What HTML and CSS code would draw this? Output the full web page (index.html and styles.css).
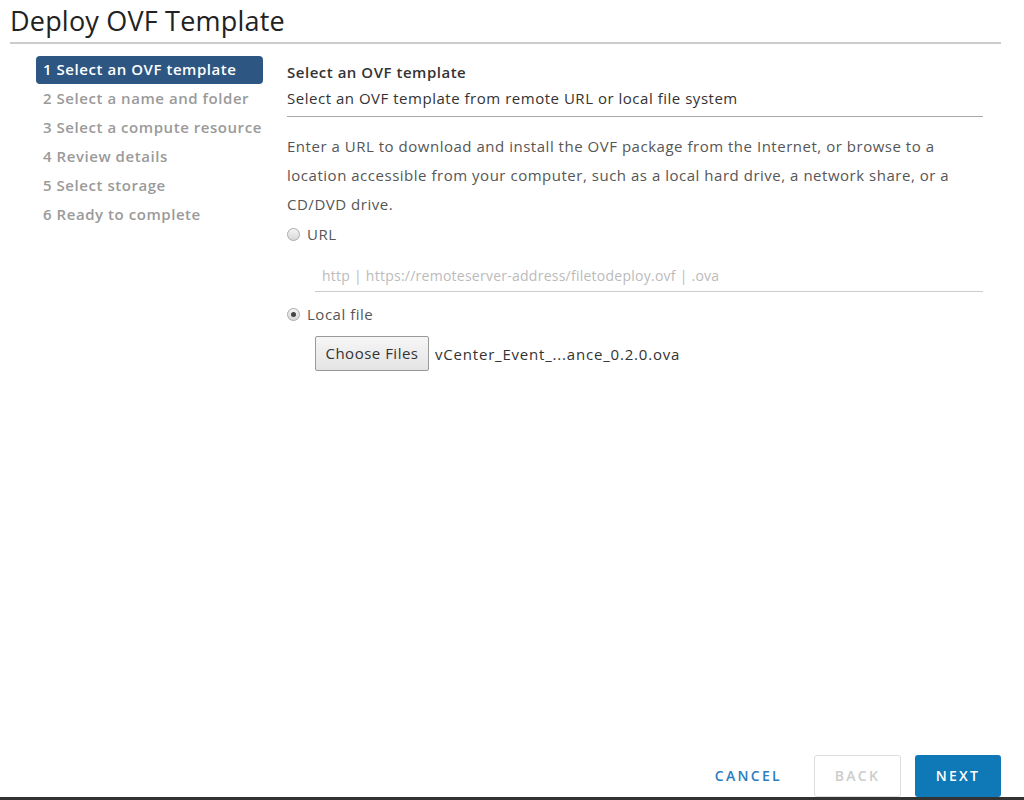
FILE: index.html
```html
<!DOCTYPE html>
<html>
<head>
<meta charset="utf-8">
<link rel="stylesheet" href="styles.css">
</head>
<body>
<div class="page">
  <header class="header"><h1 class="title">Deploy OVF Template</h1></header>
  <div class="body">
    <nav class="steps">
      <div class="step active">1 Select an OVF template</div>
      <div class="step">2 Select a name and folder</div>
      <div class="step">3 Select a compute resource</div>
      <div class="step">4 Review details</div>
      <div class="step">5 Select storage</div>
      <div class="step">6 Ready to complete</div>
    </nav>
    <main class="content">
      <div class="content-head">
        <div class="heading">Select an OVF template</div>
        <div class="subheading">Select an OVF template from remote URL or local file system</div>
      </div>
      <p class="desc">Enter a URL to download and install the OVF package from the Internet, or browse to a location accessible from your computer, such as a local hard drive, a network share, or a CD/DVD drive.</p>
      <label class="radio-row"><span class="radio"></span><span>URL</span></label>
      <div class="url-input">http | https://remoteserver-address/filetodeploy.ovf | .ova</div>
      <label class="radio-row local"><span class="radio checked"></span><span>Local file</span></label>
      <div class="file-row">
        <span class="file-btn">Choose Files</span>
        <span class="file-name">vCenter_Event_...ance_0.2.0.ova</span>
      </div>
    </main>
  </div>
  <footer class="footer">
    <span class="btn btn-link">CANCEL</span>
    <span class="btn btn-outline">BACK</span>
    <span class="btn btn-primary">NEXT</span>
  </footer>
</div>
</body>
</html>
```
FILE: styles.css
```css
html, body {
  margin: 0;
  padding: 0;
  background: #fff;
}
body {
  font-family: "Open Sans", "Liberation Sans", sans-serif;
  color: #565656;
}
.page {
  height: 800px;
  box-sizing: border-box;
  display: flex;
  flex-direction: column;
  border-bottom: 3px solid #333;
}
.header {
  margin: 0 23px 0 10px;
  border-bottom: 2px solid #ccc;
  height: 42px;
}
.title {
  margin: 0;
  font-weight: 400;
  font-size: 27px;
  line-height: 42px;
  color: #222;
  letter-spacing: 0.2px;
}
.body {
  flex: 1;
  display: flex;
  padding: 12px 41px 0 36px;
  gap: 24px;
}
.steps {
  width: 227px;
  flex: none;
  display: flex;
  flex-direction: column;
  gap: 1px;
}
.step {
  height: 28px;
  line-height: 27px;
  padding-left: 7px;
  font-size: 15px;
  font-weight: 600;
  letter-spacing: 0.55px;
  color: #9a9a9a;
  border-radius: 4px;
  white-space: nowrap;
}
.step.active {
  background: #2d5682;
  color: #fff;
}
.content {
  flex: 1;
  padding-top: 5px;
  font-size: 15px;
  letter-spacing: 0.52px;
}
.content-head {
  border-bottom: 1px solid #aaa;
  padding-bottom: 5px;
}
.heading {
  font-weight: 600;
  color: #333;
  line-height: 22px;
}
.subheading {
  color: #333;
  line-height: 26px;
  margin-top: 2px;
}
.desc {
  margin: 15px 0 0;
  line-height: 29px;
  color: #565656;
}
.radio-row {
  display: flex;
  align-items: center;
  gap: 7px;
  height: 30px;
  color: #565656;
}
.radio {
  width: 13px;
  height: 13px;
  border-radius: 50%;
  border: 1px solid #aaa;
  background: linear-gradient(#f4f4f4, #d8d8d8);
  box-sizing: border-box;
  position: relative;
}
.radio.checked::after {
  content: "";
  position: absolute;
  left: 3px;
  top: 3px;
  width: 5px;
  height: 5px;
  border-radius: 50%;
  background: #444;
}
.url-input {
  margin: 12px 0 0 28px;
  height: 30px;
  line-height: 30px;
  border-bottom: 1px solid #ccc;
  padding-left: 7px;
  font-size: 14px;
  letter-spacing: 0.25px;
  color: #bbb;
}
.radio-row.local {
  margin-top: 7px;
}
.file-row {
  display: flex;
  align-items: center;
  gap: 6px;
  margin: 7px 0 0 28px;
}
.file-btn {
  border: 1px solid #999;
  border-radius: 2px;
  background: linear-gradient(#f6f6f6, #e4e4e4);
  height: 35px;
  line-height: 33px;
  color: #333;
  box-sizing: border-box;
  width: 114px;
  text-align: center;
  letter-spacing: 0.5px;
}
.file-name {
  color: #333;
  letter-spacing: 0.8px;
}
.footer {
  display: flex;
  justify-content: flex-end;
  align-items: flex-end;
  padding: 0 23px 0 0;
  gap: 14px;
}
.btn {
  height: 42px;
  line-height: 42px;
  box-sizing: border-box;
  font-size: 14px;
  font-weight: 600;
  letter-spacing: 2.3px;
  text-align: center;
  border-radius: 3px;
}
.btn-link {
  color: #2a7dbf;
  padding: 0 18px;
}
.btn-outline {
  width: 87px;
  border: 1px solid #ddd;
  color: #ccc;
  line-height: 40px;
}
.btn-primary {
  width: 86px;
  background: #0f78b6;
  color: #fff;
}
```
